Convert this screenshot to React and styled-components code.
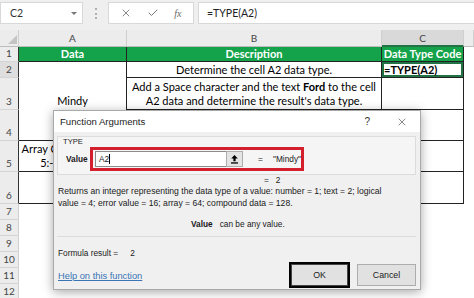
import React from "react";
import styled, { createGlobalStyle } from "styled-components";
import { X, Check } from "lucide-react";

const GlobalStyle = createGlobalStyle`
  *, *::before, *::after { box-sizing: border-box; }
  html, body { margin: 0; padding: 0; background: #fff; }
  body { font-family: "Liberation Sans", Arial, sans-serif; color: #000; }
`;

const Page = styled.div`
  position: relative;
  width: 474px;
  height: 298px;
  overflow: hidden;
  background: #fff;
`;

/* ---------- formula bar ---------- */

const FormulaBar = styled.div`
  display: flex;
  align-items: stretch;
  height: 30px;
  padding: 2px 0 6px;
  background: #efefef;
`;

const NameBox = styled.div`
  width: 83px;
  display: flex;
  align-items: center;
  justify-content: space-between;
  padding: 0 5px 0 9px;
  background: #fff;
  border: 1px solid #d8d8d8;
  font-family: Lato, "Liberation Sans", sans-serif;
  font-size: 10.5px;
  color: #333;
`;

const Caret = styled.span`
  width: 0;
  height: 0;
  border-left: 3px solid transparent;
  border-right: 3px solid transparent;
  border-top: 3px solid #777;
`;

const Grip = styled.div`
  width: 25px;
  display: flex;
  align-items: center;
  justify-content: center;
  &::before {
    content: "";
    height: 11px;
    border-left: 2px dotted #b0b0b0;
  }
`;

const IconBox = styled.div`
  width: 86px;
  display: flex;
  align-items: center;
  justify-content: space-around;
  padding: 0 4px;
  background: #fff;
  border: 1px solid #d8d8d8;
  color: #6a6a6a;
`;

const Fx = styled.span`
  font-family: "Liberation Serif", serif;
  font-style: italic;
  font-size: 10px;
  color: #6a6a6a;
`;

const FormulaInput = styled.div`
  flex: 1;
  display: flex;
  align-items: center;
  margin-left: 4px;
  padding-left: 8px;
  background: #fff;
  border: 1px solid #d8d8d8;
  border-right: none;
  font-family: Lato, "Liberation Sans", sans-serif;
  font-size: 10.5px;
  color: #222;
`;

/* ---------- sheet ---------- */

const Sheet = styled.div`
  display: grid;
  grid-template-columns: 19px 108px 255px 82px 1fr;
  grid-template-rows: 17px 15px 16px 32px 31px 31px 32px repeat(6, 16px);
  font-family: Lato, "Liberation Sans", sans-serif;
`;

const Corner = styled.div`
  display: flex;
  align-items: flex-end;
  justify-content: flex-end;
  padding: 0 1px 2px 0;
  background: #ececec;
  border-right: 1px solid #cfcfcf;
  border-bottom: 1px solid #bdbdbd;
  &::after {
    content: "";
    border-left: 9px solid transparent;
    border-bottom: 9px solid #c4c4c4;
  }
`;

const ColHead = styled.div`
  display: flex;
  align-items: center;
  justify-content: center;
  background: ${(p) => (p.$active ? "#d9d9d9" : "#ececec")};
  border-right: 1px solid #cfcfcf;
  border-bottom: ${(p) => (p.$active ? "2px solid #217346" : "1px solid #bdbdbd")};
  font-size: 10px;
  color: #444;
`;

const RowHead = styled.div`
  display: flex;
  align-items: flex-end;
  justify-content: center;
  line-height: 15px;
  background: ${(p) => (p.$active ? "#dedede" : "#ececec")};
  border-right: 1px solid ${(p) => (p.$table ? "#333" : "#cfcfcf")};
  border-bottom: 1px solid #d4d4d4;
  font-size: 10px;
  color: #444;
`;

const Cell = styled.div`
  position: relative;
  grid-row: ${(p) => (p.$span ? `span ${p.$span}` : "auto")};
  display: flex;
  align-items: center;
  justify-content: ${(p) => (p.$left ? "flex-start" : "center")};
  padding: 0 2px;
  text-align: ${(p) => (p.$left ? "left" : "center")};
  white-space: nowrap;
  overflow: hidden;
  line-height: 14px;
  font-size: 11px;
  font-weight: ${(p) => (p.$bold ? 700 : 400)};
  color: ${(p) => (p.$head ? "#fff" : "#000")};
  background: ${(p) => (p.$head ? "#14a34a" : "#fff")};
  border-right: ${(p) => (p.$table ? "1px solid #222" : "none")};
  border-bottom: ${(p) => (p.$table ? "1px solid #222" : "none")};
  box-shadow: ${(p) => (p.$selected ? "inset 0 0 0 2px #217346" : "none")};
  &::after {
    content: ${(p) => (p.$selected ? '""' : "none")};
    position: absolute;
    right: -1px;
    bottom: -2px;
    width: 4px;
    height: 4px;
    background: #217346;
  }
`;

/* ---------- dialog ---------- */

const Dialog = styled.div`
  position: absolute;
  left: 53px;
  top: 110px;
  width: 368px;
  height: 180px;
  display: flex;
  flex-direction: column;
  background: #f0f0f0;
  border: 1px solid #a9a9a9;
  box-shadow: 0 2px 10px rgba(0, 0, 0, 0.35);
  font-family: "Liberation Sans", Arial, sans-serif;
  font-size: 8.3px;
  color: #1a1a1a;
`;

const TitleBar = styled.div`
  height: 21px;
  display: flex;
  align-items: center;
  justify-content: space-between;
  padding: 0 12px 0 6px;
  background: #fff;
`;

const Title = styled.span`
  font-size: 9.6px;
  color: #222;
`;

const TitleButtons = styled.div`
  display: flex;
  align-items: center;
  gap: 26px;
  color: #333;
  font-size: 10px;
`;

const DialogBody = styled.div`
  flex: 1;
  display: flex;
  flex-direction: column;
  padding: 4px 4px 0 3px;
`;

const GroupBox = styled.div`
  padding: 0 4px 3px 5px;
  background: #f5f5f5;
  border: 1px solid #dcdcdc;
`;

const GroupLabel = styled.div`
  line-height: 10px;
  font-size: 7.6px;
  color: #222;
`;

const ArgRow = styled.div`
  display: flex;
  align-items: center;
  height: 24px;
`;

const ArgName = styled.span`
  width: 27px;
  padding-left: 3px;
  font-weight: 700;
  font-size: 8.3px;
`;

const Highlight = styled.div`
  width: 214px;
  height: 24px;
  display: flex;
  align-items: center;
  padding-left: 2px;
  border: 3px solid #d3202c;
`;

const ArgInput = styled.div`
  width: 134px;
  height: 16px;
  display: flex;
  align-items: center;
  padding-left: 3px;
  background: #fff;
  border: 1px solid #8c8c8c;
  border-right: none;
  &::after {
    content: "";
    width: 1px;
    height: 10px;
    background: #000;
  }
`;

const RefButton = styled.div`
  width: 17px;
  height: 16px;
  display: flex;
  align-items: center;
  justify-content: center;
  background: #e4e4e4;
  border: 1px solid #adadad;
`;

const ArgEq = styled.span`
  margin-left: 15px;
`;

const ArgValue = styled.span`
  margin-left: 10px;
`;

const ResultLine = styled.div`
  height: 10px;
  line-height: 10px;
  padding-left: 207px;
  display: flex;
  gap: 7px;
`;

const Description = styled.div`
  padding-left: 1px;
  line-height: 12px;
  font-size: 8.6px;
  white-space: nowrap;
`;

const Hint = styled.div`
  margin-top: 9px;
  padding-left: 134px;
  line-height: 12px;
  b { margin-right: 7px; }
`;

const Divider = styled.div`
  margin-top: 6px;
  height: 1px;
  background: #dcdcdc;
`;

const Footer = styled.div`
  height: 52px;
  display: flex;
  justify-content: space-between;
`;

const FooterLeft = styled.div`
  display: flex;
  flex-direction: column;
  align-items: flex-start;
  padding: 10px 0 0 1px;
  line-height: 12px;
`;

const ResultValue = styled.span`
  margin-left: 12px;
`;

const HelpLink = styled.a`
  margin-top: 11px;
  font-size: 9.3px;
  color: #3a74b5;
  text-decoration: underline;
`;

const Buttons = styled.div`
  align-self: flex-end;
  display: flex;
  align-items: center;
  gap: 7px;
  height: 26px;
  margin-bottom: 1px;
`;

const DlgButton = styled.div`
  width: ${(p) => (p.$primary ? "61px" : "59px")};
  height: ${(p) => (p.$primary ? "26px" : "22px")};
  display: flex;
  align-items: center;
  justify-content: center;
  background: #e1e1e1;
  border: ${(p) => (p.$primary ? "2px solid #000" : "1px solid #adadad")};
  box-shadow: ${(p) => (p.$primary ? "inset 0 0 0 1px #444" : "none")};
  font-size: 8.8px;
`;

export default function App() {
  return (
    <Page>
      <GlobalStyle />
      <FormulaBar>
        <NameBox>
          C2
          <Caret />
        </NameBox>
        <Grip />
        <IconBox>
          <X size={12} strokeWidth={1.6} />
          <Check size={12} strokeWidth={1.8} />
          <Fx>fx</Fx>
        </IconBox>
        <FormulaInput>=TYPE(A2)</FormulaInput>
      </FormulaBar>

      <Sheet>
        <Corner />
        <ColHead>A</ColHead>
        <ColHead>B</ColHead>
        <ColHead $active>C</ColHead>
        <ColHead />

        <RowHead $table>1</RowHead>
        <Cell $table $head $bold>Data</Cell>
        <Cell $table $head $bold>Description</Cell>
        <Cell $table $head $bold>Data Type Code</Cell>
        <Cell />

        <RowHead $table $active>2</RowHead>
        <Cell $table $span={3}>Mindy</Cell>
        <Cell $table>Determine the cell A2 data type.</Cell>
        <Cell $table $selected $bold $left>=TYPE(A2)</Cell>
        <Cell />

        <RowHead $table>3</RowHead>
        <Cell $table>
          <span>
            Add a Space character and the text <b>Ford</b> to the cell
            <br />
            A2 data and determine the result's data type.
          </span>
        </Cell>
        <Cell $table />
        <Cell />

        <RowHead $table>4</RowHead>
        <Cell $table />
        <Cell $table />
        <Cell />

        <RowHead $table>5</RowHead>
        <Cell $table>
          <span>
            Array Constant Value
            <br />
            5:- {"{5,6,7,8,9}"}
          </span>
        </Cell>
        <Cell $table />
        <Cell $table />
        <Cell />

        <RowHead $table>6</RowHead>
        <Cell $table />
        <Cell $table />
        <Cell $table />
        <Cell />

        {[7, 8, 9, 10, 11, 12].map((n) => (
          <React.Fragment key={n}>
            <RowHead>{n}</RowHead>
            <Cell />
            <Cell />
            <Cell />
            <Cell />
          </React.Fragment>
        ))}
      </Sheet>

      <Dialog>
        <TitleBar>
          <Title>Function Arguments</Title>
          <TitleButtons>
            <span>?</span>
            <X size={12} strokeWidth={1.2} />
          </TitleButtons>
        </TitleBar>
        <DialogBody>
          <GroupBox>
            <GroupLabel>TYPE</GroupLabel>
            <ArgRow>
              <ArgName>Value</ArgName>
              <Highlight>
                <ArgInput>A2</ArgInput>
                <RefButton>
                  <svg width="9" height="10" viewBox="0 0 9 10">
                    <path d="M4.5 1 L1.2 4.6 H3.4 V7.2 H5.6 V4.6 H7.8 Z" fill="#000" />
                    <rect x="1" y="8.3" width="7" height="1.3" fill="#000" />
                  </svg>
                </RefButton>
                <ArgEq>=</ArgEq>
                <ArgValue>"Mindy"</ArgValue>
              </Highlight>
            </ArgRow>
          </GroupBox>
          <ResultLine>
            <span>=</span>
            <span>2</span>
          </ResultLine>
          <Description>
            Returns an integer representing the data type of a value: number = 1; text = 2; logical
            <br />
            value = 4; error value = 16; array = 64; compound data = 128.
          </Description>
          <Hint>
            <b>Value</b>can be any value.
          </Hint>
          <Divider />
          <Footer>
            <FooterLeft>
              <span>
                Formula result =<ResultValue>2</ResultValue>
              </span>
              <HelpLink>Help on this function</HelpLink>
            </FooterLeft>
            <Buttons>
              <DlgButton $primary>OK</DlgButton>
              <DlgButton>Cancel</DlgButton>
            </Buttons>
          </Footer>
        </DialogBody>
      </Dialog>
    </Page>
  );
}
